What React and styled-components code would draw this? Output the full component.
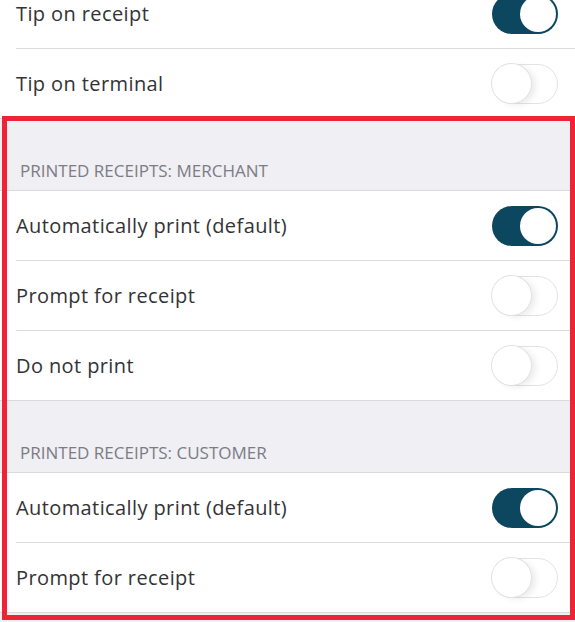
import React from "react";
import styled, { createGlobalStyle } from "styled-components";

const Global = createGlobalStyle`
  html, body { margin: 0; padding: 0; background: #ffffff; }
  body { font-family: "Open Sans", Roboto, "Liberation Sans", sans-serif; overflow: hidden; }
  * { box-sizing: border-box; }
`;

const Screen = styled.div`
  position: relative;
  width: 575px;
  height: 622px;
  overflow: hidden;
  background: #efeff4;
`;

const List = styled.div`
  margin-top: -21px;
  display: flex;
  flex-direction: column;
`;

const Group = styled.div`
  background: #ffffff;
  display: flex;
  flex-direction: column;
  border-bottom: 1px solid #d9d9de;
`;

const Header = styled.div`
  height: 72px;
  display: flex;
  align-items: flex-end;
  padding: 0 0 8px 20px;
  background: #efeff4;
  color: #7c7c84;
  font-size: 17px;
  line-height: 22px;
  text-transform: uppercase;
  border-bottom: 1px solid #d9d9de;
`;

const Row = styled.div`
  height: ${(p) => (p.$last ? "69px" : "70px")};
  display: flex;
  align-items: center;
  justify-content: space-between;
  padding-right: 17px;
  margin-left: 16px;
  border-bottom: ${(p) => (p.$last ? "none" : "1px solid #dcdce0")};
`;

const Label = styled.span`
  font-size: 20px;
  letter-spacing: 0.4px;
  color: #333336;
`;

const Track = styled.div`
  position: relative;
  width: 66px;
  height: 40px;
  border-radius: 20px;
  flex-shrink: 0;
  background: ${(p) => (p.$on ? "#0d465f" : "#ffffff")};
  border: ${(p) => (p.$on ? "none" : "1.5px solid #e3e3e6")};
`;

const Knob = styled.div`
  position: absolute;
  top: ${(p) => (p.$on ? "2px" : "-1px")};
  left: ${(p) => (p.$on ? "28px" : "-1px")};
  width: ${(p) => (p.$on ? "36px" : "39px")};
  height: ${(p) => (p.$on ? "36px" : "39px")};
  border-radius: 50%;
  background: #ffffff;
  box-shadow: ${(p) =>
    p.$on
      ? "none"
      : "0 0 0 1px #e2e2e5, 5px 2px 6px rgba(0,0,0,0.08)"};
`;

const Highlight = styled.div`
  position: absolute;
  left: 2px;
  top: 116px;
  width: 573px;
  height: 504px;
  border: 5px solid #ee2436;
  pointer-events: none;
`;

function Toggle({ on }) {
  return (
    <Track $on={on}>
      <Knob $on={on} />
    </Track>
  );
}

const groups = [
  {
    header: null,
    rows: [
      { label: "Tip on receipt", on: true },
      { label: "Tip on terminal", on: false },
    ],
  },
  {
    header: "Printed receipts: Merchant",
    rows: [
      { label: "Automatically print (default)", on: true },
      { label: "Prompt for receipt", on: false },
      { label: "Do not print", on: false },
    ],
  },
  {
    header: "Printed receipts: Customer",
    rows: [
      { label: "Automatically print (default)", on: true },
      { label: "Prompt for receipt", on: false },
    ],
  },
];

export default function App() {
  return (
    <>
      <Global />
      <Screen>
        <List>
          {groups.map((g, gi) => (
            <React.Fragment key={gi}>
              {g.header && <Header>{g.header}</Header>}
              <Group>
                {g.rows.map((r, ri) => (
                  <Row key={ri} $last={ri === g.rows.length - 1}>
                    <Label>{r.label}</Label>
                    <Toggle on={r.on} />
                  </Row>
                ))}
              </Group>
            </React.Fragment>
          ))}
        </List>
        <Highlight />
      </Screen>
    </>
  );
}
